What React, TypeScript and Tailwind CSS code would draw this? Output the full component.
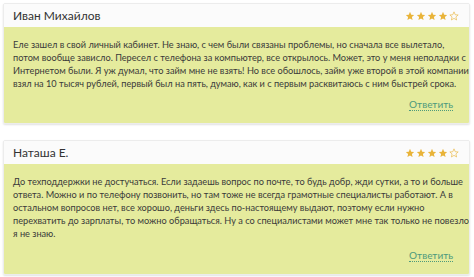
import React from 'react';

function Stars() {
  return (
    <div className="flex items-center gap-[1px]">
      {[0, 1, 2, 3, 4].map((i) => (
        <svg key={i} width="10" height="10" viewBox="0 0 24 24">
          <path
            d="M12 2l2.9 6.9 7.1.6-5.4 4.7 1.6 7.3L12 17.7 5.8 21.5l1.6-7.3L2 9.5l7.1-.6z"
            fill={i < 4 ? '#e9b43a' : 'none'}
            stroke="#e9b43a"
            strokeWidth={i < 4 ? 0 : 1.5}
            strokeLinejoin="round"
          />
        </svg>
      ))}
    </div>
  );
}

const reviews = [
  {
    name: 'Иван Михайлов',
    lines: [
      'Еле зашел в свой личный кабинет. Не знаю, с чем были связаны проблемы, но сначала все вылетало,',
      'потом вообще зависло. Пересел с телефона за компьютер, все открылось. Может, это у меня неполадки с',
      'Интернетом были. Я уж думал, что займ мне не взять! Но все обошлось, займ уже второй в этой компании,',
      'взял на 10 тысяч рублей, первый был на пять, думаю, как и с первым расквитаюсь с ним быстрей срока.',
    ],
    h: 'h-[96px]',
  },
  {
    name: 'Наташа Е.',
    lines: [
      'До техподдержки не достучаться. Если задаешь вопрос по почте, то будь добр, жди сутки, а то и больше',
      'ответа. Можно и по телефону позвонить, но там тоже не всегда грамотные специалисты работают. А в',
      'остальном вопросов нет, все хорошо, деньги здесь по-настоящему выдают, поэтому если нужно',
      'перехватить до зарплаты, то можно обращаться. Ну а со специалистами может мне так только не повезло,',
      'я не знаю.',
    ],
    h: 'h-[110px]',
  },
];

export default function App() {
  return (
    <div className="w-[474px] h-[277px] bg-white pt-[3px] pl-[3px] pr-[4px] flex flex-col gap-[16px] font-['Lato',sans-serif] overflow-hidden">
      {reviews.map((r, idx) => (
        <div key={idx} className="rounded-[2px] shadow-[0_1px_2px_rgba(0,0,0,0.12)] border border-[#ececec] overflow-hidden">
          <div className="h-[23px] bg-[#fbfbfb] flex items-center justify-between pl-[9px] pr-[10px]">
            <span className="text-[12px] text-[#333] leading-none">{r.name}</span>
            <Stars />
          </div>
          <div className={`${r.h} bg-[#e5eb9d] pl-[9px] pr-[8px] pt-[11px] relative`}>
            <div className="text-[9.2px] leading-[13px] text-[#3a3a3a] whitespace-nowrap">
              {r.lines.map((l, i) => (
                <div key={i}>{l}</div>
              ))}
            </div>
            <span className="absolute right-[16px] bottom-[12px] text-[10px] text-[#4d9a7c] border-b border-dotted border-[#4d9a7c] leading-[12px]">
              Ответить
            </span>
          </div>
        </div>
      ))}
    </div>
  );
}
